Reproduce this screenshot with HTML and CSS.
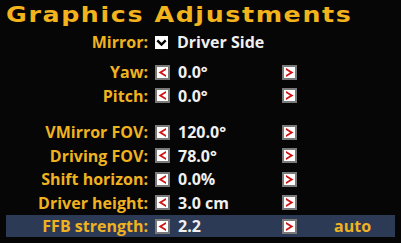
FILE: index.html
```html
<!DOCTYPE html>
<html>
<head>
<meta charset="utf-8">
<link rel="stylesheet" href="styles.css">
</head>
<body>
<div class="panel">
  <h1 class="title">Graphics Adjustments</h1>
  <div class="rows">
    <div class="row row-mirror">
      <span class="label">Mirror:</span>
      <span class="check"><svg viewBox="0 0 13 13" width="13" height="13"><path d="M2.3 4.3 L6.5 8.6 L10.7 4.3" fill="none" stroke="#000" stroke-width="2.4"/></svg></span>
      <span class="value value-check">Driver Side</span>
    </div>
    <div class="row row-yaw">
      <span class="label">Yaw:</span>
      <span class="btn"><svg viewBox="0 0 11 11" width="11" height="11"><polygon points="9,1 1.5,5.5 9,10 9,8 5,5.5 9,3" fill="#d01515"/></svg></span>
      <span class="value">0.0°</span>
      <span class="btn"><svg viewBox="0 0 11 11" width="11" height="11"><polygon points="2,1 9.5,5.5 2,10 2,8 6,5.5 2,3" fill="#d01515"/></svg></span>
    </div>
    <div class="row">
      <span class="label">Pitch:</span>
      <span class="btn"><svg viewBox="0 0 11 11" width="11" height="11"><polygon points="9,1 1.5,5.5 9,10 9,8 5,5.5 9,3" fill="#d01515"/></svg></span>
      <span class="value">0.0°</span>
      <span class="btn"><svg viewBox="0 0 11 11" width="11" height="11"><polygon points="2,1 9.5,5.5 2,10 2,8 6,5.5 2,3" fill="#d01515"/></svg></span>
    </div>
    <div class="row row-group">
      <span class="label">VMirror FOV:</span>
      <span class="btn"><svg viewBox="0 0 11 11" width="11" height="11"><polygon points="9,1 1.5,5.5 9,10 9,8 5,5.5 9,3" fill="#d01515"/></svg></span>
      <span class="value">120.0°</span>
      <span class="btn"><svg viewBox="0 0 11 11" width="11" height="11"><polygon points="2,1 9.5,5.5 2,10 2,8 6,5.5 2,3" fill="#d01515"/></svg></span>
    </div>
    <div class="row">
      <span class="label">Driving FOV:</span>
      <span class="btn"><svg viewBox="0 0 11 11" width="11" height="11"><polygon points="9,1 1.5,5.5 9,10 9,8 5,5.5 9,3" fill="#d01515"/></svg></span>
      <span class="value">78.0°</span>
      <span class="btn"><svg viewBox="0 0 11 11" width="11" height="11"><polygon points="2,1 9.5,5.5 2,10 2,8 6,5.5 2,3" fill="#d01515"/></svg></span>
    </div>
    <div class="row">
      <span class="label">Shift horizon:</span>
      <span class="btn"><svg viewBox="0 0 11 11" width="11" height="11"><polygon points="9,1 1.5,5.5 9,10 9,8 5,5.5 9,3" fill="#d01515"/></svg></span>
      <span class="value">0.0%</span>
      <span class="btn"><svg viewBox="0 0 11 11" width="11" height="11"><polygon points="2,1 9.5,5.5 2,10 2,8 6,5.5 2,3" fill="#d01515"/></svg></span>
    </div>
    <div class="row">
      <span class="label">Driver height:</span>
      <span class="btn"><svg viewBox="0 0 11 11" width="11" height="11"><polygon points="9,1 1.5,5.5 9,10 9,8 5,5.5 9,3" fill="#d01515"/></svg></span>
      <span class="value">3.0 cm</span>
      <span class="btn"><svg viewBox="0 0 11 11" width="11" height="11"><polygon points="2,1 9.5,5.5 2,10 2,8 6,5.5 2,3" fill="#d01515"/></svg></span>
    </div>
    <div class="row row-active">
      <span class="label">FFB strength:</span>
      <span class="btn"><svg viewBox="0 0 11 11" width="11" height="11"><polygon points="9,1 1.5,5.5 9,10 9,8 5,5.5 9,3" fill="#d01515"/></svg></span>
      <span class="value">2.2</span>
      <span class="btn"><svg viewBox="0 0 11 11" width="11" height="11"><polygon points="2,1 9.5,5.5 2,10 2,8 6,5.5 2,3" fill="#d01515"/></svg></span>
      <span class="extra">auto</span>
    </div>
  </div>
</div>
</body>
</html>
```
FILE: styles.css
```css
html, body {
  margin: 0;
  padding: 0;
  background: #060606;
}
body {
  width: 401px;
  height: 243px;
  overflow: hidden;
  font-family: "Open Sans", "Noto Sans", sans-serif;
}
.panel {
  padding-top: 2px;
}
.title {
  width: max-content;
  margin: 0 0 0 6px;
  font-family: "DejaVu Sans", sans-serif;
  font-weight: bold;
  font-size: 22px;
  line-height: 26px;
  height: 26px;
  letter-spacing: 1.4px;
  color: #f2b31c;
  transform: scaleX(1.15);
  transform-origin: left center;
  white-space: nowrap;
}
.rows {
  display: flex;
  flex-direction: column;
  gap: 1.5px;
  margin-top: 3px;
}
.row {
  display: flex;
  align-items: center;
  height: 22px;
  width: 389px;
  margin-left: 6px;
  font-size: 16px;
  font-weight: bold;
}
.row-yaw {
  margin-top: 6.5px;
}
.row-group {
  margin-top: 13px;
}
.row-active {
  background: #2d3a55;
}
.label {
  width: 142px;
  text-align: right;
  color: #f0b320;
  white-space: nowrap;
}
.btn {
  box-sizing: border-box;
  width: 15px;
  height: 15px;
  margin-left: 7px;
  border: 2px solid #7a7a7a;
  background: #fff;
  display: flex;
  align-items: center;
  justify-content: center;
}
.btn svg {
  display: block;
}
.value + .btn {
  margin-left: 0;
}
.value {
  width: 104px;
  margin-left: 8px;
  color: #f0f0f0;
  white-space: nowrap;
}
.check {
  box-sizing: border-box;
  width: 13px;
  height: 13px;
  margin-left: 7px;
  background: #fff;
  display: flex;
}
.check svg {
  display: block;
}
.value-check {
  margin-left: 9px;
}
.extra {
  margin-left: 37px;
  color: #f0b320;
}
```
